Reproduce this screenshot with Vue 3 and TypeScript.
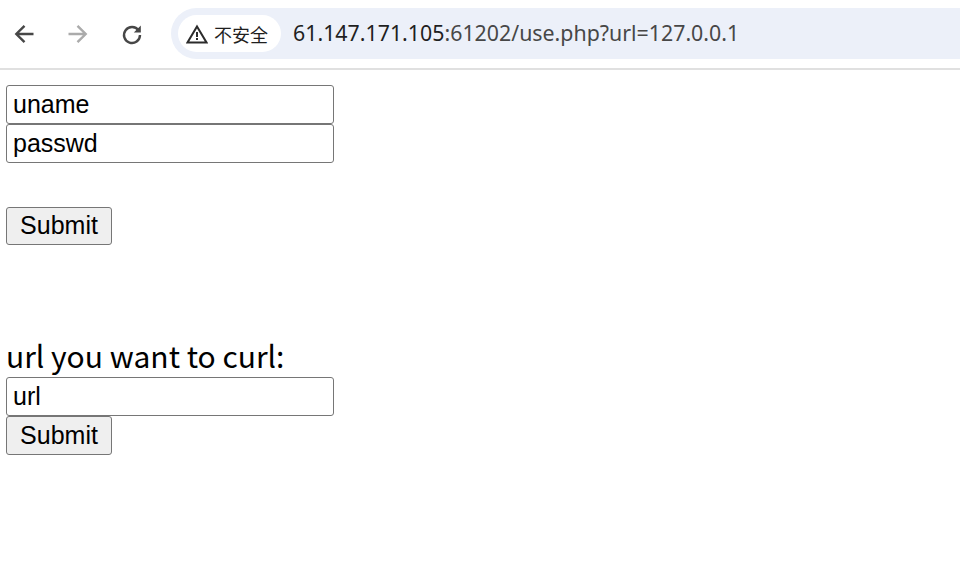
<script setup lang="ts">
const host = '61.147.171.105'
const rest = ':61202/use.php?url=127.0.0.1'
</script>

<template>
  <div class="page">
    <header class="toolbar">
      <button class="nav" aria-label="Back">
        <svg width="24" height="24" viewBox="0 0 24 24"><path d="M21.500 12H4.500M12.500 3.800L4.300 12l8.200 8.200" fill="none" stroke="#474747" stroke-width="2.400"/></svg>
      </button>
      <button class="nav" aria-label="Forward">
        <svg width="24" height="24" viewBox="0 0 24 24"><path d="M2.500 12h17M11.500 3.800l8.200 8.200-8.200 8.200" fill="none" stroke="#ababab" stroke-width="2.400"/></svg>
      </button>
      <button class="nav" aria-label="Reload">
        <svg width="24" height="24" viewBox="0 0 24 24"><path d="M18.600 8.500A8 8 0 1 0 20 13" fill="none" stroke="#474747" stroke-width="2.400"/><path d="M20.800 3.500V10.500H13.800Z" fill="#474747"/></svg>
      </button>
      <div class="omnibox">
        <div class="chip">
          <svg width="22" height="20" viewBox="0 0 22 20"><path d="M11 2.500 20.500 18.500H1.500Z" fill="none" stroke="#2b2b2b" stroke-width="2" stroke-linejoin="miter"/><path d="M10 8h2v5h-2zM10 14h2v2h-2z" fill="#2b2b2b"/></svg>
          <span class="chip-text">不安全</span>
        </div>
        <div class="url"><span class="host">{{ host }}</span><span class="rest">{{ rest }}</span></div>
      </div>
    </header>

    <main class="content">
      <form class="login" @submit.prevent>
        <input class="field" type="text" value="uname" />
        <input class="field" type="text" value="passwd" />
        <button class="submit" type="submit">Submit</button>
      </form>
      <form class="curl" @submit.prevent>
        <div class="label">url you want to curl:</div>
        <input class="field" type="text" value="url" />
        <button class="submit" type="submit">Submit</button>
      </form>
    </main>
  </div>
</template>

<style scoped>
.page {
  width: 960px;
  height: 575px;
  overflow: hidden;
  background: #fff;
}
.toolbar {
  height: 68px;
  border-bottom: 2px solid #e0e0e0;
  display: flex;
  align-items: center;
  padding-left: 6px;
}
.nav {
  width: 36px;
  height: 36px;
  padding: 0;
  margin-right: 18px;
  border: 0;
  background: none;
  display: flex;
  align-items: center;
  justify-content: center;
}
.omnibox {
  margin-left: 3px;
  margin-top: -1px;
  flex: 1;
  height: 51px;
  border-radius: 26px 0 0 26px;
  background: #ecf0f9;
  display: flex;
  align-items: center;
  padding-left: 7px;
}
.chip {
  height: 37px;
  width: 103px;
  border-radius: 19px;
  background: #fff;
  display: flex;
  align-items: center;
  padding-left: 8px;
  box-sizing: border-box;
  gap: 6px;
}
.chip-text {
  font: 18px "Noto Sans CJK SC", sans-serif;
  color: #1f1f1f;
  white-space: nowrap;
}
.url {
  margin-left: 12px;
  margin-top: -2px;
  font: 21.350px "Noto Sans", "Open Sans", sans-serif;
  white-space: nowrap;
}
.host { color: #1f1f1f; }
.rest { color: #474747; }
.content {
  padding: 15px 6px 0;
}
.login {
  display: flex;
  flex-direction: column;
  align-items: flex-start;
}
.field {
  width: 328px;
  height: 39px;
  box-sizing: border-box;
  padding: 0 6px;
  border: 1px solid #767676;
  border-radius: 3px;
  background: #fff;
  color: #000;
  font: 25px "Liberation Sans", Arial, sans-serif;
  outline: none;
}
.submit {
  width: 106px;
  height: 38px;
  padding: 0 0 1px;
  border: 1px solid #767676;
  border-radius: 3px;
  background: #efefef;
  color: #000;
  font: 25px "Liberation Sans", Arial, sans-serif;
}
.login .submit {
  margin-top: 44px;
}
.curl {
  display: flex;
  flex-direction: column;
  align-items: flex-start;
  margin-top: 92px;
}
.curl .submit {
  height: 39px;
}
.label {
  font: 30px/36px "Noto Sans CJK SC", sans-serif;
  padding-bottom: 4px;
  color: #000;
  white-space: nowrap;
}
</style>
